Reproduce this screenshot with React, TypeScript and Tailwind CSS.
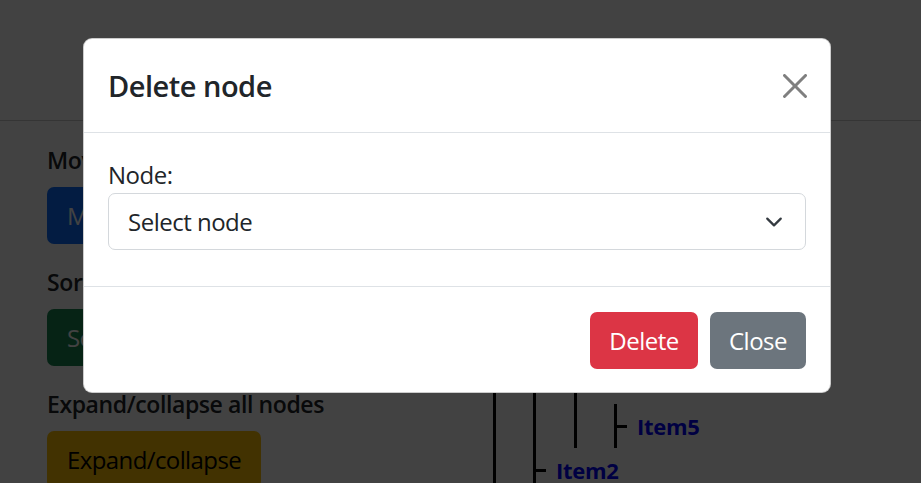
import React from "react";

const FONT = { fontFamily: '"Open Sans", "Noto Sans", sans-serif' };

function TreeRow({ label }: { label: string }) {
  return (
    <div className="h-[44px] flex items-center">
      <div className="w-[10px] h-[3px] bg-black" />
      <span className="ml-[10px] text-[22px] font-bold leading-none text-[#0000ff] tracking-[-0.3px]">{label}</span>
    </div>
  );
}

function Group({ title, btn, cls }: { title: string; btn: string; cls: string }) {
  return (
    <div className="mb-[24px]">
      <div className="text-[23px] font-semibold leading-[29px] mb-[12px] text-[#212529] tracking-[-0.4px]">{title}</div>
      <button className={`h-[57px] px-[20px] rounded-[7px] text-[24px] leading-none tracking-[-0.6px] ${cls}`}>{btn}</button>
    </div>
  );
}

export default function App() {
  return (
    <div className="relative w-[921px] h-[483px] overflow-hidden bg-white" style={FONT}>
      {/* page */}
      <div className="h-[121px] border-b border-[#cccccc]" />
      <div className="flex">
        <div className="w-[493px] pl-[47px] pt-[25px]">
          <Group title="Move node" btn="Move node" cls="bg-[#0d6efd] text-white" />
          <Group title="Sort nodes" btn="Sort nodes" cls="bg-[#198754] text-white" />
          <Group title="Expand/collapse all nodes" btn="Expand/collapse" cls="bg-[#ffc107] text-black" />
        </div>
        <div className="pt-[63px]">
          <div className="border-l-[3px] border-black">
            <TreeRow label="Root" />
            <div className="ml-[37px] border-l-[3px] border-black">
              <TreeRow label="Item1" />
              <div className="ml-[38px] border-l-[3px] border-black">
                <TreeRow label="Item3" />
                <TreeRow label="Item6" />
                <TreeRow label="Item4" />
                <div className="ml-[37px] border-l-[3px] border-black">
                  <TreeRow label="Item5" />
                </div>
              </div>
              <TreeRow label="Item2" />
              <TreeRow label="Item7" />
            </div>
          </div>
        </div>
      </div>

      {/* backdrop */}
      <div className="absolute inset-0 bg-[rgba(0,0,0,0.74)]" />

      {/* modal */}
      <div className="absolute inset-0 pl-[83px] pt-[38px]">
        <div className="w-[748px] bg-white border border-black/20 rounded-[9px] text-[#212529]">
          <div className="flex items-center px-[24px] py-[24px] border-b border-[#dee2e6]">
            <div className="flex-1 text-[29px] font-semibold leading-[45px] tracking-[-0.5px]">Delete node</div>
            <button className="w-[36px] h-[36px] -mr-[7px] flex items-center justify-center">
              <svg width="24" height="24" viewBox="0 0 16 16">
                <path
                  fill="#000"
                  fillOpacity="0.5"
                  d="M.293.293a1 1 0 0 1 1.414 0L8 6.586 14.293.293a1 1 0 1 1 1.414 1.414L9.414 8l6.293 6.293a1 1 0 0 1-1.414 1.414L8 9.414l-6.293 6.293a1 1 0 0 1-1.414-1.414L6.586 8 .293 1.707a1 1 0 0 1 0-1.414"
                />
              </svg>
            </button>
          </div>
          <div className="px-[24px] pt-[24px] pb-[24px]">
            <div className="text-[24px] leading-[36px] tracking-[-0.5px]">Node:</div>
            <div className="mb-[12px] h-[57px] border border-[#d4d8dc] rounded-[7px] flex items-center pl-[19px] pr-[22px]">
              <span className="flex-1 text-[24px] leading-none tracking-[-0.5px]">Select node</span>
              <svg width="18" height="18" viewBox="0 0 16 16">
                <path d="m2 5 6 6 6-6" fill="none" stroke="#343a40" strokeWidth="2" strokeLinecap="round" strokeLinejoin="round" />
              </svg>
            </div>
          </div>
          <div className="border-t border-[#dee2e6] flex justify-end gap-[12px] px-[24px] pt-[25px] pb-[23px]">
            <button className="w-[108px] h-[57px] rounded-[7px] bg-[#dc3545] text-white text-[24px] leading-none tracking-[-0.5px]">Delete</button>
            <button className="w-[96px] h-[57px] rounded-[7px] bg-[#6c757d] text-white text-[24px] leading-none tracking-[-0.5px]">Close</button>
          </div>
        </div>
      </div>
    </div>
  );
}
